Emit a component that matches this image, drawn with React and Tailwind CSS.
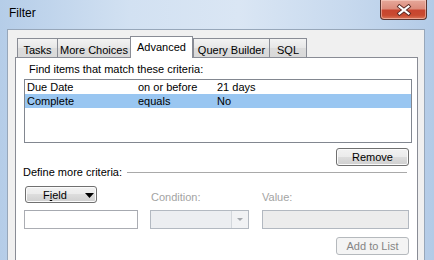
import React from 'react';

const font = "font-['Liberation_Sans',Arial,sans-serif]";
const btn =
  'rounded-[3px] border border-[#707070] bg-[linear-gradient(#f2f2f2_0%,#ebebeb_50%,#dddddd_50%,#cfcfcf_100%)] shadow-[inset_0_0_0_1px_#fbfbfb] text-black';

const tabs = [
  { label: 'Tasks', w: 'w-[41px]' },
  { label: 'More Choices', w: 'w-[74px]' },
  { label: 'Advanced', w: 'w-[63px]', active: true },
  { label: 'Query Builder', w: 'w-[77px]' },
  { label: 'SQL', w: 'w-[38px]' },
];

const rows = [
  { field: 'Due Date', cond: 'on or before', value: '21 days' },
  { field: 'Complete', cond: 'equals', value: 'No', selected: true },
];

function CloseButton() {
  return (
    <div className="mr-[7px] flex h-[20px] w-[47px] items-center justify-center rounded-b-[4px] border border-t-0 border-[#5a3531] bg-[linear-gradient(#e6a89a_0%,#dc8c7c_45%,#c8452f_55%,#c94a30_80%,#d9765a_100%)] shadow-[inset_0_0_0_1px_rgba(255,220,210,0.5)]">
      <svg width="16" height="12" viewBox="0 0 16 12">
        <path d="M3.5 2.5 L12.5 9.5 M12.5 2.5 L3.5 9.5" stroke="#5a2a24" strokeWidth="4" strokeLinecap="square" />
        <path d="M3.5 2.5 L12.5 9.5 M12.5 2.5 L3.5 9.5" stroke="#ffffff" strokeWidth="2.2" strokeLinecap="square" />
      </svg>
    </div>
  );
}

export default function App() {
  return (
    <div className={`${font} h-[260px] w-[434px] overflow-hidden bg-[linear-gradient(90deg,#b5cde8,#d2e1f2_30%,#dae6f4_55%,#c7d9ee_80%,#b3cbe7)] text-[11px] text-black`}>
      {/* title bar */}
      <div className="flex h-[29px] items-start justify-between">
        <span className="mt-[6px] ml-[9px] text-[12px] leading-[15px]">Filter</span>
        <CloseButton />
      </div>

      {/* dialog body */}
      <div className="ml-[7px] h-[240px] w-[418px] border border-[#97a7ba] bg-[#f0f0f0] pt-[6px]">
        {/* tab strip */}
        <div className="ml-[9px] flex h-[22px] items-end">
          {tabs.map((t) =>
            t.active ? (
              <div
                key={t.label}
                className={`${t.w} relative z-10 flex h-[22px] justify-center border border-b-0 border-[#898c95] bg-white pt-[3px] leading-[14px]`}
              >
                {t.label}
              </div>
            ) : (
              <div
                key={t.label}
                className={`${t.w} -mr-px flex h-[20px] justify-center border border-[#898c95] bg-[linear-gradient(#f3f3f3,#e6e6e6_50%,#dcdcdc_51%,#d9d9d9)] pt-[4px] leading-[14px]`}
              >
                {t.label}
              </div>
            )
          )}
        </div>

        {/* tab page */}
        <div className="-mt-px ml-[7px] h-[230px] w-[403px] border border-[#898c95] bg-white pl-[8px] pr-[5px]">
          <div className="mt-[4px] ml-[5px] leading-[15px]">Find items that match these criteria:</div>

          <div className="mt-[2px] h-[64px] w-[388px] border border-[#828790] bg-white">
            {rows.map((r) => (
              <div key={r.field} className={`flex h-[14px] items-center pl-[2px] leading-[14px] ${r.selected ? 'bg-[#99c6f1]' : ''}`}>
                <span className="w-[111px]">{r.field}</span>
                <span className="w-[79px]">{r.cond}</span>
                <span>{r.value}</span>
              </div>
            ))}
          </div>

          <div className="flex justify-end pr-[3px]">
            <button className={`${btn} mt-[5px] h-[18px] w-[73px] text-[11px] leading-[14px]`}>Remove</button>
          </div>

          <div className="flex items-center">
            <span className="-ml-px leading-[13px]">Define more criteria:</span>
            <div className="mr-[5px] ml-[5px] h-px flex-1 bg-[#a9a9a9]" />
          </div>

          {/* criteria row */}
          <div className="mt-[7px] flex items-start">
            <div className="w-[126px]">
              <button className={`${btn} relative ml-px flex h-[17px] w-[72px] items-center text-[11px] leading-[14px]`}>
                <span className="ml-[17px]">
                  F<span className="underline">i</span>eld
                </span>
                <svg className="absolute top-[6px] left-[59px]" width="9" height="5" viewBox="0 0 9 5">
                  <path d="M0 0 H9 L4.5 5 Z" fill="#000" />
                </svg>
              </button>
            </div>
            <div className="mt-[5px] w-[112px] pl-px leading-[13px] text-[#a3a3a3]">Condition:</div>
            <div className="mt-[5px] leading-[13px] text-[#a3a3a3]">Value:</div>
          </div>

          <div className="mt-[6px] flex items-start">
            <div className="h-[19px] w-[114px] border border-[#abadb3] border-t-[#a6a9b0] bg-white" />
            <div className="ml-[12px] flex h-[19px] w-[99px] border border-[#b3b9c1] bg-[#eceef1]">
              <div className="flex-1" />
              <div className="flex w-[17px] items-center justify-center border-l border-[#d3d7dc] bg-[#f1f2f4]">
                <svg width="6" height="3" viewBox="0 0 6 3">
                  <path d="M0 0 H6 L3 3 Z" fill="#a4a8ad" />
                </svg>
              </div>
            </div>
            <div className="ml-[13px] h-[19px] w-[147px] border border-[#b2b8c0] bg-[#ececec]" />
          </div>

          <div className="flex justify-end pr-[3px]">
            <button className="mt-[8px] h-[18px] w-[73px] rounded-[3px] border border-[#b5b9bd] bg-[#f4f4f4] text-[11px] leading-[14px] text-[#858585]">
              Add to List
            </button>
          </div>
        </div>
      </div>
    </div>
  );
}
